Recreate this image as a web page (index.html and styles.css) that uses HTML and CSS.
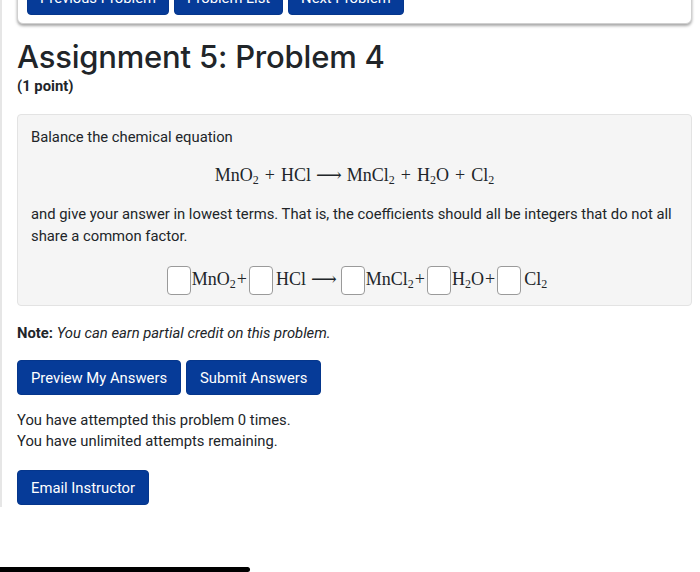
FILE: index.html
```html
<!DOCTYPE html>
<html lang="en">
<head>
    <meta charset="UTF-8">
    <meta name="viewport" content="width=device-width, initial-scale=1.0">
    <title>Assignment 5: Problem 4</title>
    <link rel="stylesheet" href="styles.css">
</head>
<body>
    <div class="page">
        <div class="nav-card">
            <button class="btn">Previous Problem</button>
            <button class="btn">Problem List</button>
            <button class="btn">Next Problem</button>
        </div>

        <h1 class="title">Assignment 5: Problem 4</h1>
        <div class="points">(1 point)</div>

        <div class="problem">
            <p>Balance the chemical equation</p>
            <div class="eq">
                MnO<sub>2</sub><span class="op">+</span>HCl<span class="arrow">&#x27F6;</span>MnCl<sub>2</sub><span class="op">+</span>H<sub>2</sub>O<span class="op">+</span>Cl<sub>2</sub>
            </div>
            <p>and give your answer in lowest terms. That is, the coefficients should all be integers that do not all share a common factor.</p>
            <div class="eq answers"><input class="blank" type="text">MnO<sub>2</sub><span class="plus">+</span><input class="blank" type="text"><span class="gap"></span>HCl<span class="arrow small">&#x27F6;</span><input class="blank" type="text">MnCl<sub>2</sub><span class="plus">+</span><input class="blank" type="text">H<sub>2</sub>O<span class="plus">+</span><input class="blank" type="text"><span class="gap"></span>Cl<sub>2</sub></div>
        </div>

        <p class="note"><b>Note:</b> <i>You can earn partial credit on this problem.</i></p>

        <div class="actions">
            <button class="btn">Preview My Answers</button>
            <button class="btn">Submit Answers</button>
        </div>

        <p class="attempts">You have attempted this problem 0 times.<br>You have unlimited attempts remaining.</p>

        <button class="btn">Email Instructor</button>
    </div>
    <div class="home-bar"></div>
</body>
</html>
```

FILE: styles.css
```css
body {
    margin: 0;
    padding: 0;
    font-family: Roboto, "Liberation Sans", sans-serif;
    font-size: 14.8px;
    color: #212529;
    background: #fff;
    overflow: hidden;
    height: 572px;
    position: relative;
}
.page {
    border-left: 2px solid #e6e6e6;
    padding: 0 8px 0 15px;
    height: 536px;
    box-sizing: border-box;
}
.nav-card {
    margin-top: -29px;
    padding: 8px 9px 8px;
    border: 1px solid #d0d0d0;
    border-radius: 6px;
    box-shadow: 0 2px 3px rgba(0, 0, 0, 0.35);
    display: flex;
    gap: 5px;
    background: #fff;
}
.btn {
    background-color: #063b98;
    color: #fff;
    border: 1px solid #05368c;
    border-radius: 4px;
    font-family: inherit;
    font-size: 14.8px;
    padding: 0 13px;
    height: 35px;
    cursor: pointer;
}
.nav-card .btn { padding: 0 12px; }
.title {
    font-family: Inter, Roboto, sans-serif;
    font-size: 31px;
    font-weight: 500;
    margin: 15px 0 0;
    line-height: 36px;
    letter-spacing: -0.2px;
}
.points {
    font-weight: bold;
    margin-top: 2px;
}
.problem {
    margin-top: 19px;
    background: #f5f5f5;
    border: 1px solid #e3e3e3;
    border-radius: 4px;
    padding: 11px 13px 10px;
}
.problem p {
    margin: 0;
    line-height: 22px;
}
.eq {
    font-family: "Liberation Serif", "DejaVu Serif", serif;
    font-size: 18px;
    text-align: center;
    margin: 16px 0 17px;
}
.eq sub {
    font-size: 12px;
    vertical-align: -3px;
    line-height: 0;
}
.op { margin: 0 6px; }
.arrow { margin: 0 5px; }
.answers {
    margin: 16px 0 0;
    height: 32px;
    line-height: 32px;
    padding-left: 4px;
}
.plus { margin: 0 1px; }
.gap { display: inline-block; width: 2px; }
.arrow.small { margin: 0 3px 0 5px; }
.blank {
    width: 24px;
    height: 29px;
    box-sizing: border-box;
    border: 1px solid #9a9a9a;
    border-radius: 4px;
    background: #fff;
    margin: 0 1px;
    padding: 0;
    vertical-align: middle;
}
.note {
    margin: 16px 0 16px;
    line-height: 22px;
}
.actions {
    display: flex;
    gap: 5px;
}
.attempts {
    margin: 15px 0 18px;
    line-height: 21px;
}
.home-bar {
    position: absolute;
    left: 0;
    top: 567px;
    width: 250px;
    height: 5px;
    background: #000;
    border-radius: 0 3px 3px 0;
}
```
